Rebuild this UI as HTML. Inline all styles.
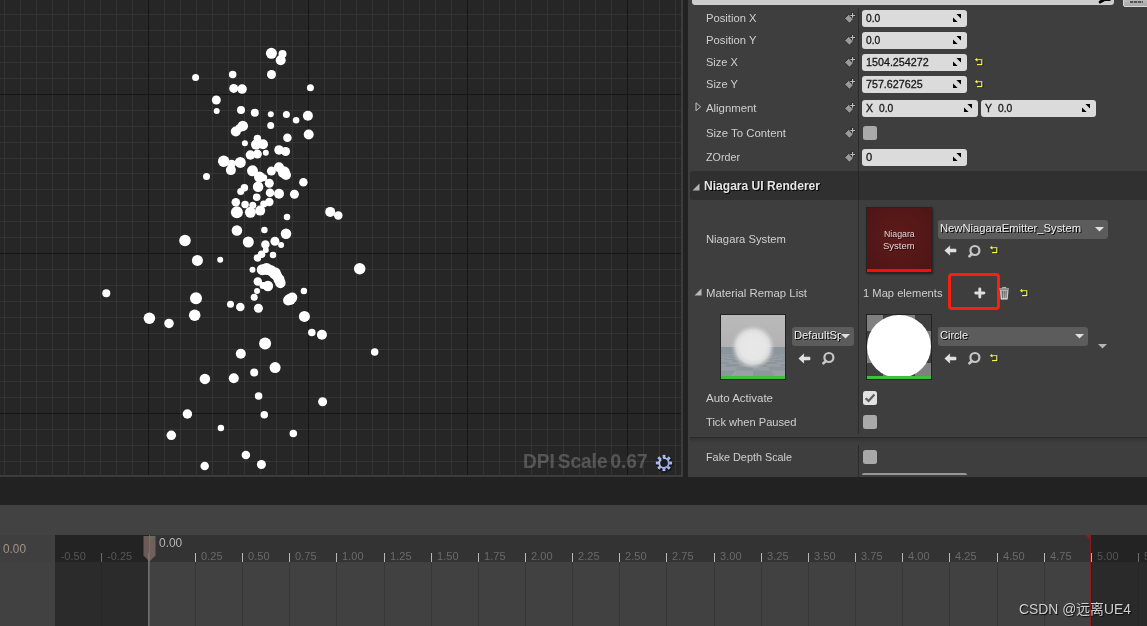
<!DOCTYPE html>
<html lang="zh"><head><meta charset="utf-8"><title>Niagara UI Renderer</title>
<style>
html,body{margin:0;padding:0;}
body{width:1147px;height:626px;overflow:hidden;background:#222222;position:relative;font-family:"Liberation Sans", sans-serif;font-size:12px;}
.a{position:absolute;}
.t{position:absolute;white-space:nowrap;transform-origin:0 50%;line-height:16px;height:16px;}
.box{position:absolute;background:#dbdbdb;border-radius:3px;}
.cb{position:absolute;width:14px;height:14px;border-radius:2.5px;background:#a9a9a9;}
svg{position:absolute;overflow:visible;}
</style></head><body>
<div id="root" class="a" style="left:0;top:0;width:1147px;height:626px;will-change:transform;">

<div class="a" id="viewport" style="left:0;top:0;width:681px;height:475px;background:#262626;border-right:2px solid #3c3c3c;border-bottom:2px solid #3c3c3c;overflow:hidden;">
<svg width="681" height="475" viewBox="0 0 681 475" shape-rendering="crispEdges" style="left:0;top:0">
<path d="M4 -1v477M20 -1v477M36 -1v477M52 -1v477M68 -1v477M84 -1v477M100 -1v477M116 -1v477M132 -1v477M164 -1v477M180 -1v477M196 -1v477M212 -1v477M228 -1v477M244 -1v477M260 -1v477M276 -1v477M292 -1v477M324 -1v477M340 -1v477M356 -1v477M372 -1v477M388 -1v477M403 -1v477M419 -1v477M435 -1v477M451 -1v477M483 -1v477M499 -1v477M515 -1v477M531 -1v477M547 -1v477M563 -1v477M579 -1v477M595 -1v477M611 -1v477M643 -1v477M659 -1v477M675 -1v477M-1 14h683M-1 30h683M-1 46h683M-1 62h683M-1 78h683M-1 110h683M-1 126h683M-1 142h683M-1 158h683M-1 173h683M-1 189h683M-1 205h683M-1 221h683M-1 237h683M-1 269h683M-1 285h683M-1 301h683M-1 317h683M-1 333h683M-1 349h683M-1 365h683M-1 381h683M-1 397h683M-1 429h683M-1 445h683M-1 461h683" stroke="#343434" stroke-width="1" fill="none" transform="translate(0.5,0.5)"/>
<path d="M148 -1v477M308 -1v477M467 -1v477M627 -1v477M-1 94h683M-1 253h683M-1 413h683" stroke="#161616" stroke-width="1" fill="none" transform="translate(0.5,0.5)"/>
</svg>
<svg width="681" height="475" viewBox="0 0 681 475" style="left:0;top:0"><g fill="#ffffff">
<circle cx="271.4" cy="53.3" r="5.50"/>
<circle cx="282.5" cy="54.0" r="4.00"/>
<circle cx="280.7" cy="60.2" r="5.00"/>
<circle cx="195.6" cy="77.4" r="3.50"/>
<circle cx="232.7" cy="74.5" r="3.75"/>
<circle cx="271.5" cy="74.5" r="4.50"/>
<circle cx="233.7" cy="88.4" r="4.50"/>
<circle cx="242.1" cy="89.1" r="4.75"/>
<circle cx="310.4" cy="87.8" r="3.50"/>
<circle cx="216.3" cy="100.0" r="4.50"/>
<circle cx="216.7" cy="110.9" r="3.00"/>
<circle cx="241.0" cy="110.0" r="4.00"/>
<circle cx="254.8" cy="112.8" r="4.00"/>
<circle cx="270.8" cy="114.3" r="3.00"/>
<circle cx="286.4" cy="114.6" r="3.50"/>
<circle cx="296.1" cy="120.2" r="3.25"/>
<circle cx="307.9" cy="115.7" r="5.00"/>
<circle cx="270.7" cy="125.5" r="3.50"/>
<circle cx="242.8" cy="125.9" r="5.25"/>
<circle cx="235.8" cy="131.5" r="5.00"/>
<circle cx="239.3" cy="128.2" r="4.00"/>
<circle cx="308.7" cy="134.5" r="5.00"/>
<circle cx="287.4" cy="137.7" r="4.25"/>
<circle cx="244.9" cy="143.2" r="3.00"/>
<circle cx="257.4" cy="138.4" r="3.75"/>
<circle cx="256.0" cy="144.6" r="5.00"/>
<circle cx="263.0" cy="144.3" r="5.00"/>
<circle cx="265.8" cy="152.7" r="3.00"/>
<circle cx="279.0" cy="149.9" r="4.75"/>
<circle cx="285.6" cy="151.5" r="4.50"/>
<circle cx="250.4" cy="155.0" r="4.75"/>
<circle cx="257.4" cy="154.1" r="4.50"/>
<circle cx="223.7" cy="161.3" r="5.75"/>
<circle cx="231.6" cy="163.8" r="4.00"/>
<circle cx="240.3" cy="162.4" r="5.50"/>
<circle cx="230.9" cy="170.1" r="5.00"/>
<circle cx="206.5" cy="176.4" r="3.50"/>
<circle cx="252.5" cy="170.8" r="5.50"/>
<circle cx="259.5" cy="177.1" r="5.50"/>
<circle cx="263.7" cy="177.8" r="3.50"/>
<circle cx="271.4" cy="171.1" r="4.50"/>
<circle cx="279.0" cy="167.3" r="5.00"/>
<circle cx="283.9" cy="172.2" r="6.00"/>
<circle cx="286.0" cy="175.0" r="5.00"/>
<circle cx="303.4" cy="182.2" r="4.25"/>
<circle cx="269.3" cy="183.3" r="4.50"/>
<circle cx="258.1" cy="186.8" r="5.25"/>
<circle cx="244.4" cy="187.8" r="3.75"/>
<circle cx="240.7" cy="191.4" r="3.50"/>
<circle cx="270.0" cy="192.7" r="4.25"/>
<circle cx="279.0" cy="193.8" r="5.00"/>
<circle cx="294.4" cy="194.2" r="4.50"/>
<circle cx="256.7" cy="197.3" r="3.75"/>
<circle cx="235.8" cy="202.3" r="4.25"/>
<circle cx="245.1" cy="204.6" r="3.75"/>
<circle cx="252.8" cy="205.3" r="3.50"/>
<circle cx="269.3" cy="201.9" r="4.25"/>
<circle cx="263.7" cy="203.9" r="3.50"/>
<circle cx="236.9" cy="212.3" r="6.00"/>
<circle cx="250.4" cy="212.3" r="5.50"/>
<circle cx="260.2" cy="210.6" r="5.00"/>
<circle cx="287.0" cy="216.9" r="3.25"/>
<circle cx="330.2" cy="211.9" r="5.00"/>
<circle cx="338.3" cy="215.4" r="4.25"/>
<circle cx="236.9" cy="230.5" r="5.25"/>
<circle cx="264.4" cy="229.9" r="3.25"/>
<circle cx="286.0" cy="233.7" r="5.25"/>
<circle cx="185.0" cy="240.5" r="5.75"/>
<circle cx="248.3" cy="242.0" r="5.50"/>
<circle cx="274.9" cy="241.3" r="4.50"/>
<circle cx="281.1" cy="245.1" r="3.00"/>
<circle cx="265.4" cy="244.4" r="4.25"/>
<circle cx="265.8" cy="250.0" r="3.00"/>
<circle cx="261.6" cy="254.2" r="3.75"/>
<circle cx="257.4" cy="257.9" r="3.75"/>
<circle cx="273.0" cy="254.9" r="3.25"/>
<circle cx="197.4" cy="260.4" r="5.50"/>
<circle cx="220.2" cy="259.7" r="3.00"/>
<circle cx="252.5" cy="269.7" r="3.00"/>
<circle cx="262.3" cy="269.7" r="5.50"/>
<circle cx="270.7" cy="270.4" r="5.50"/>
<circle cx="276.9" cy="275.9" r="5.25"/>
<circle cx="280.4" cy="282.9" r="5.25"/>
<circle cx="257.8" cy="281.5" r="4.25"/>
<circle cx="267.9" cy="286.0" r="5.25"/>
<circle cx="263.0" cy="285.5" r="3.50"/>
<circle cx="257.0" cy="290.9" r="3.00"/>
<circle cx="254.2" cy="297.2" r="3.50"/>
<circle cx="303.9" cy="291.0" r="3.25"/>
<circle cx="196.0" cy="298.3" r="6.00"/>
<circle cx="288.1" cy="300.4" r="5.00"/>
<circle cx="292.3" cy="297.6" r="5.00"/>
<circle cx="230.5" cy="304.3" r="3.50"/>
<circle cx="240.3" cy="306.9" r="4.25"/>
<circle cx="258.4" cy="308.3" r="4.50"/>
<circle cx="194.7" cy="315.3" r="5.75"/>
<circle cx="304.4" cy="316.4" r="5.50"/>
<circle cx="311.8" cy="332.4" r="3.75"/>
<circle cx="321.9" cy="334.8" r="5.00"/>
<circle cx="265.1" cy="343.6" r="6.00"/>
<circle cx="240.8" cy="353.8" r="5.00"/>
<circle cx="275.1" cy="367.6" r="5.50"/>
<circle cx="254.2" cy="372.5" r="4.00"/>
<circle cx="233.8" cy="378.2" r="5.00"/>
<circle cx="204.9" cy="378.9" r="5.25"/>
<circle cx="258.6" cy="396.0" r="3.75"/>
<circle cx="322.6" cy="401.8" r="4.50"/>
<circle cx="187.4" cy="414.0" r="4.75"/>
<circle cx="264.3" cy="414.7" r="3.75"/>
<circle cx="220.9" cy="427.9" r="3.25"/>
<circle cx="171.3" cy="435.3" r="4.75"/>
<circle cx="293.3" cy="433.5" r="3.75"/>
<circle cx="106.3" cy="293.2" r="4.00"/>
<circle cx="149.4" cy="318.2" r="5.75"/>
<circle cx="169.0" cy="323.4" r="4.75"/>
<circle cx="245.9" cy="454.9" r="4.25"/>
<circle cx="204.7" cy="466.0" r="4.25"/>
<circle cx="261.4" cy="464.5" r="4.50"/>
<circle cx="359.7" cy="268.8" r="5.75"/>
<circle cx="374.7" cy="352.1" r="3.75"/>
<circle cx="266.5" cy="269.0" r="6.00"/>
<circle cx="274.9" cy="273.2" r="6.00"/>
<circle cx="279.0" cy="279.4" r="5.50"/>
<circle cx="290.2" cy="299.2" r="5.75"/>
</g></svg>
<span class="t" id="dpi" style="transform:scaleX(0.9072);left:523.4px;top:448.5px;font-size:21px;line-height:24px;height:24px;font-weight:bold;color:rgba(255,255,255,.215);word-spacing:-2.6px;">DPI Scale 0.67</span>
<svg width="20" height="20" viewBox="-10 -10 20 20" style="left:654px;top:453px"><defs><linearGradient id="gg" x1="0" y1="1" x2="1" y2="0"><stop offset="0" stop-color="#8c9ed8"/><stop offset="1" stop-color="#bccaf6"/></linearGradient></defs>
<g transform="translate(0.7,0.8)" fill="#101010" stroke="#101010" opacity=".8">
<rect x="-1.7" y="-8.2" width="3.4" height="3.6" transform="rotate(0)"/>
<rect x="-1.7" y="-8.2" width="3.4" height="3.6" transform="rotate(45)"/>
<rect x="-1.7" y="-8.2" width="3.4" height="3.6" transform="rotate(90)"/>
<rect x="-1.7" y="-8.2" width="3.4" height="3.6" transform="rotate(135)"/>
<rect x="-1.7" y="-8.2" width="3.4" height="3.6" transform="rotate(180)"/>
<rect x="-1.7" y="-8.2" width="3.4" height="3.6" transform="rotate(225)"/>
<rect x="-1.7" y="-8.2" width="3.4" height="3.6" transform="rotate(270)"/>
<rect x="-1.7" y="-8.2" width="3.4" height="3.6" transform="rotate(315)"/>
<circle r="4.8" fill="none" stroke-width="2"/></g>
<circle r="3.9" fill="#1a1a1a"/>
<g fill="url(#gg)">
<rect x="-1.45" y="-8.1" width="2.9" height="3.4" transform="rotate(0)"/>
<rect x="-1.45" y="-8.1" width="2.9" height="3.4" transform="rotate(45)"/>
<rect x="-1.45" y="-8.1" width="2.9" height="3.4" transform="rotate(90)"/>
<rect x="-1.45" y="-8.1" width="2.9" height="3.4" transform="rotate(135)"/>
<rect x="-1.45" y="-8.1" width="2.9" height="3.4" transform="rotate(180)"/>
<rect x="-1.45" y="-8.1" width="2.9" height="3.4" transform="rotate(225)"/>
<rect x="-1.45" y="-8.1" width="2.9" height="3.4" transform="rotate(270)"/>
<rect x="-1.45" y="-8.1" width="2.9" height="3.4" transform="rotate(315)"/>
</g><circle r="4.8" fill="none" stroke="url(#gg)" stroke-width="1.9" stroke-dasharray="27.16 3" transform="rotate(-100)"/></svg>
</div>
<div class="a" id="panel" style="left:688px;top:0;width:459px;height:477px;background:#3e3e3e;overflow:hidden;">
<div class="a" style="left:4px;top:-6px;width:422px;height:11px;background:#cdcdcd;border-radius:3px;"></div>
<svg width="14" height="6" viewBox="0 0 14 6" style="left:410px;top:0"><path d="M2.2 2 L8 -1.2" stroke="#000" stroke-width="3" stroke-linecap="round"/><path d="M6 -0.2h6.5" stroke="#000" stroke-width="2.4"/></svg>
<div class="a" style="left:435px;top:-4px;width:30px;height:9px;background:linear-gradient(#c6c6c6,#a8a8a8);border:1px solid #d8d8d8;border-radius:2px;"></div>
<div class="a" style="left:442px;top:1px;width:13px;height:2px;background:repeating-linear-gradient(90deg,#555 0 3px,#999 3px 4px);"></div>
<div class="a" style="left:170px;top:8px;width:1px;height:426px;background:#2b2b2b;"></div>
<div class="a" style="left:170px;top:445px;width:1px;height:40px;background:#2b2b2b;"></div>
<div class="a" style="left:2px;top:171px;width:457px;height:29px;background:#303030;border-radius:3px 0 0 3px;"></div>
<div class="a" style="left:170px;top:171px;width:1px;height:29px;background:#262626;"></div>
<svg width="8" height="8" viewBox="0 0 8 8" style="left:4.399999999999977px;top:182.5px"><path d="M7.5 0.5v7h-7z" fill="#b4b4b4"/></svg>
<span class="t" style="transform:scaleX(0.9148);left:15.700000000000045px;top:178.4px;font-size:13.2px;font-weight:bold;color:#e6e6e6;text-shadow:1px 1px 0 #000;">Niagara UI Renderer</span>
<span class="t" style="transform:scaleX(1.0196);left:18.0px;top:10.3px;font-size:11px;color:#cfcfcf;">Position X</span>
<span class="t" style="transform:scaleX(1.0238);left:18.0px;top:32.3px;font-size:11px;color:#cfcfcf;">Position Y</span>
<span class="t" style="transform:scaleX(1.0001);left:18.0px;top:54.3px;font-size:11px;color:#cfcfcf;">Size X</span>
<span class="t" style="transform:scaleX(1.0065);left:18.0px;top:76.3px;font-size:11px;color:#cfcfcf;">Size Y</span>
<span class="t" style="transform:scaleX(1.0323);left:18.0px;top:100.3px;font-size:11px;color:#cfcfcf;">Alignment</span>
<span class="t" style="transform:scaleX(1.0327);left:18.0px;top:125.3px;font-size:11px;color:#cfcfcf;">Size To Content</span>
<span class="t" style="transform:scaleX(0.9758);left:18.0px;top:149.3px;font-size:11px;color:#cfcfcf;">ZOrder</span>
<span class="t" style="transform:scaleX(1.0222);left:18.0px;top:231.3px;font-size:11px;color:#cfcfcf;">Niagara System</span>
<span class="t" style="transform:scaleX(1.0324);left:18.0px;top:285.3px;font-size:11px;color:#cfcfcf;">Material Remap List</span>
<span class="t" style="transform:scaleX(1.0433);left:18.0px;top:390.3px;font-size:11px;color:#cfcfcf;">Auto Activate</span>
<span class="t" style="transform:scaleX(1.0113);left:18.0px;top:414.3px;font-size:11px;color:#cfcfcf;">Tick when Paused</span>
<span class="t" style="transform:scaleX(0.9836);left:18.0px;top:449.3px;font-size:11px;color:#cfcfcf;">Fake Depth Scale</span>
<span class="t" style="transform:scaleX(1.0158);left:175.0px;top:285.3px;font-size:11px;color:#cfcfcf;">1 Map elements</span>
<svg width="8" height="10" viewBox="0 0 8 10" style="left:7px;top:102px"><path d="M1 0.8 L5.6 4.8 L1 8.8z" fill="none" stroke="#c0c0c0" stroke-width="1"/></svg>
<svg width="8" height="8" viewBox="0 0 8 8" style="left:6px;top:288px"><path d="M7.5 0.5v7h-7z" fill="#b8b8b8"/></svg>
<svg width="13" height="13" viewBox="0 0 13 13" style="left:156px;top:12.0px"><path d="M0.7 6.4 L4.8 2.2 L9.6 6.9 L5.4 11.3z" fill="#9a9a9a" stroke="#2a2a2a" stroke-width="0.9"/><path d="M5.8 3.5h5.8M8.6 0.6v5.7" stroke="#2a2a2a" stroke-width="2.6"/><path d="M6.3 3.5h4.8M8.6 1.1v4.7" stroke="#bcbcbc" stroke-width="1.15"/></svg>
<svg width="13" height="13" viewBox="0 0 13 13" style="left:156px;top:34.0px"><path d="M0.7 6.4 L4.8 2.2 L9.6 6.9 L5.4 11.3z" fill="#9a9a9a" stroke="#2a2a2a" stroke-width="0.9"/><path d="M5.8 3.5h5.8M8.6 0.6v5.7" stroke="#2a2a2a" stroke-width="2.6"/><path d="M6.3 3.5h4.8M8.6 1.1v4.7" stroke="#bcbcbc" stroke-width="1.15"/></svg>
<svg width="13" height="13" viewBox="0 0 13 13" style="left:156px;top:56.0px"><path d="M0.7 6.4 L4.8 2.2 L9.6 6.9 L5.4 11.3z" fill="#9a9a9a" stroke="#2a2a2a" stroke-width="0.9"/><path d="M5.8 3.5h5.8M8.6 0.6v5.7" stroke="#2a2a2a" stroke-width="2.6"/><path d="M6.3 3.5h4.8M8.6 1.1v4.7" stroke="#bcbcbc" stroke-width="1.15"/></svg>
<svg width="13" height="13" viewBox="0 0 13 13" style="left:156px;top:78.0px"><path d="M0.7 6.4 L4.8 2.2 L9.6 6.9 L5.4 11.3z" fill="#9a9a9a" stroke="#2a2a2a" stroke-width="0.9"/><path d="M5.8 3.5h5.8M8.6 0.6v5.7" stroke="#2a2a2a" stroke-width="2.6"/><path d="M6.3 3.5h4.8M8.6 1.1v4.7" stroke="#bcbcbc" stroke-width="1.15"/></svg>
<svg width="13" height="13" viewBox="0 0 13 13" style="left:156px;top:102.0px"><path d="M0.7 6.4 L4.8 2.2 L9.6 6.9 L5.4 11.3z" fill="#9a9a9a" stroke="#2a2a2a" stroke-width="0.9"/><path d="M5.8 3.5h5.8M8.6 0.6v5.7" stroke="#2a2a2a" stroke-width="2.6"/><path d="M6.3 3.5h4.8M8.6 1.1v4.7" stroke="#bcbcbc" stroke-width="1.15"/></svg>
<svg width="13" height="13" viewBox="0 0 13 13" style="left:156px;top:126.5px"><path d="M0.7 6.4 L4.8 2.2 L9.6 6.9 L5.4 11.3z" fill="#9a9a9a" stroke="#2a2a2a" stroke-width="0.9"/><path d="M5.8 3.5h5.8M8.6 0.6v5.7" stroke="#2a2a2a" stroke-width="2.6"/><path d="M6.3 3.5h4.8M8.6 1.1v4.7" stroke="#bcbcbc" stroke-width="1.15"/></svg>
<svg width="13" height="13" viewBox="0 0 13 13" style="left:156px;top:151.0px"><path d="M0.7 6.4 L4.8 2.2 L9.6 6.9 L5.4 11.3z" fill="#9a9a9a" stroke="#2a2a2a" stroke-width="0.9"/><path d="M5.8 3.5h5.8M8.6 0.6v5.7" stroke="#2a2a2a" stroke-width="2.6"/><path d="M6.3 3.5h4.8M8.6 1.1v4.7" stroke="#bcbcbc" stroke-width="1.15"/></svg>
<div class="box" style="left:174px;top:10px;width:105px;height:17px;"></div>
<svg width="8" height="8" viewBox="0 0 8 8" style="left:265px;top:14px"><path d="M3.4 0H8v4.6zM0 3.4V8h4.6z" fill="#000"/></svg>
<span class="t" style="transform:scaleX(0.9348);left:177.6px;top:10.4px;font-size:11px;color:#161616;-webkit-text-stroke:0.3px #161616;">0.0</span>
<div class="box" style="left:174px;top:32px;width:105px;height:17px;"></div>
<svg width="8" height="8" viewBox="0 0 8 8" style="left:265px;top:36px"><path d="M3.4 0H8v4.6zM0 3.4V8h4.6z" fill="#000"/></svg>
<span class="t" style="transform:scaleX(0.9348);left:177.6px;top:32.4px;font-size:11px;color:#161616;-webkit-text-stroke:0.3px #161616;">0.0</span>
<div class="box" style="left:174px;top:54px;width:105px;height:17px;"></div>
<svg width="8" height="8" viewBox="0 0 8 8" style="left:265px;top:58px"><path d="M3.4 0H8v4.6zM0 3.4V8h4.6z" fill="#000"/></svg>
<span class="t" style="transform:scaleX(0.9761);left:177.6px;top:54.4px;font-size:11px;color:#161616;-webkit-text-stroke:0.3px #161616;">1504.254272</span>
<div class="box" style="left:174px;top:76px;width:105px;height:17px;"></div>
<svg width="8" height="8" viewBox="0 0 8 8" style="left:265px;top:80px"><path d="M3.4 0H8v4.6zM0 3.4V8h4.6z" fill="#000"/></svg>
<span class="t" style="transform:scaleX(0.9738);left:177.6px;top:76.4px;font-size:11px;color:#161616;-webkit-text-stroke:0.3px #161616;">757.627625</span>
<div class="box" style="left:174px;top:100px;width:116px;height:17px;"></div>
<svg width="8" height="8" viewBox="0 0 8 8" style="left:276px;top:104px"><path d="M3.4 0H8v4.6zM0 3.4V8h4.6z" fill="#000"/></svg>
<span class="t" style="transform:scaleX(0.9532);left:177.6px;top:100.4px;font-size:11px;color:#161616;-webkit-text-stroke:0.3px #161616;">X</span>
<span class="t" style="transform:scaleX(0.9348);left:191.0px;top:100.4px;font-size:11px;color:#161616;-webkit-text-stroke:0.3px #161616;">0.0</span>
<div class="box" style="left:293px;top:100px;width:115px;height:17px;"></div>
<svg width="8" height="8" viewBox="0 0 8 8" style="left:394px;top:104px"><path d="M3.4 0H8v4.6zM0 3.4V8h4.6z" fill="#000"/></svg>
<span class="t" style="transform:scaleX(0.9532);left:296.6px;top:100.4px;font-size:11px;color:#161616;-webkit-text-stroke:0.3px #161616;">Y</span>
<span class="t" style="transform:scaleX(0.9348);left:310.0px;top:100.4px;font-size:11px;color:#161616;-webkit-text-stroke:0.3px #161616;">0.0</span>
<div class="box" style="left:174px;top:149px;width:105px;height:17px;"></div>
<svg width="8" height="8" viewBox="0 0 8 8" style="left:265px;top:153px"><path d="M3.4 0H8v4.6zM0 3.4V8h4.6z" fill="#000"/></svg>
<span class="t" style="transform:scaleX(1.0122);left:177.6px;top:149.4px;font-size:11px;color:#161616;-webkit-text-stroke:0.3px #161616;">0</span>
<svg width="10" height="10" viewBox="0 0 10 10" style="left:286.79999999999995px;top:57.8px"><g transform="translate(0.9,0.9)" stroke="#14143c" fill="#14143c"><path d="M0.2 1.7 L1.8 0.2 L2.4 3.3z" stroke-width="0.5"/><path d="M1.7 1.7H6.8V6.6H2.1" fill="none" stroke-width="1.2"/></g><path d="M0.2 1.7 L1.8 0.2 L2.4 3.3z" fill="#f8f840" stroke="#f8f840" stroke-width="0.5"/><path d="M1.7 1.7H6.8V6.6H2.1" fill="none" stroke="#f8f840" stroke-width="1.15"/></svg>
<svg width="10" height="10" viewBox="0 0 10 10" style="left:286.79999999999995px;top:79.8px"><g transform="translate(0.9,0.9)" stroke="#14143c" fill="#14143c"><path d="M0.2 1.7 L1.8 0.2 L2.4 3.3z" stroke-width="0.5"/><path d="M1.7 1.7H6.8V6.6H2.1" fill="none" stroke-width="1.2"/></g><path d="M0.2 1.7 L1.8 0.2 L2.4 3.3z" fill="#f8f840" stroke="#f8f840" stroke-width="0.5"/><path d="M1.7 1.7H6.8V6.6H2.1" fill="none" stroke="#f8f840" stroke-width="1.15"/></svg>
<svg width="10" height="10" viewBox="0 0 10 10" style="left:301.79999999999995px;top:246px"><g transform="translate(0.9,0.9)" stroke="#14143c" fill="#14143c"><path d="M0.2 1.7 L1.8 0.2 L2.4 3.3z" stroke-width="0.5"/><path d="M1.7 1.7H6.8V6.6H2.1" fill="none" stroke-width="1.2"/></g><path d="M0.2 1.7 L1.8 0.2 L2.4 3.3z" fill="#f8f840" stroke="#f8f840" stroke-width="0.5"/><path d="M1.7 1.7H6.8V6.6H2.1" fill="none" stroke="#f8f840" stroke-width="1.15"/></svg>
<svg width="10" height="10" viewBox="0 0 10 10" style="left:332px;top:288.8px"><g transform="translate(0.9,0.9)" stroke="#14143c" fill="#14143c"><path d="M0.2 1.7 L1.8 0.2 L2.4 3.3z" stroke-width="0.5"/><path d="M1.7 1.7H6.8V6.6H2.1" fill="none" stroke-width="1.2"/></g><path d="M0.2 1.7 L1.8 0.2 L2.4 3.3z" fill="#f8f840" stroke="#f8f840" stroke-width="0.5"/><path d="M1.7 1.7H6.8V6.6H2.1" fill="none" stroke="#f8f840" stroke-width="1.15"/></svg>
<svg width="10" height="10" viewBox="0 0 10 10" style="left:302.20000000000005px;top:354.2px"><g transform="translate(0.9,0.9)" stroke="#14143c" fill="#14143c"><path d="M0.2 1.7 L1.8 0.2 L2.4 3.3z" stroke-width="0.5"/><path d="M1.7 1.7H6.8V6.6H2.1" fill="none" stroke-width="1.2"/></g><path d="M0.2 1.7 L1.8 0.2 L2.4 3.3z" fill="#f8f840" stroke="#f8f840" stroke-width="0.5"/><path d="M1.7 1.7H6.8V6.6H2.1" fill="none" stroke="#f8f840" stroke-width="1.15"/></svg>
<div class="cb" style="left:175px;top:126px;"></div>
<div class="cb" style="left:175px;top:391px;background:#e2e2e2;"></div>
<svg width="14" height="14" viewBox="0 0 14 14" style="left:175px;top:391px"><path d="M2.6 7.2 L5.6 10 L11.4 3.6" fill="none" stroke="#5c5c5c" stroke-width="2.2"/></svg>
<div class="cb" style="left:175px;top:415px;"></div>
<div class="cb" style="left:175px;top:450px;"></div>
<div class="a" style="left:174px;top:473px;width:105px;height:2px;background:#979797;border-radius:2px 2px 0 0;"></div>
<div class="a" style="left:2px;top:437px;width:457px;height:1px;background:#2b2b2b;"></div>
<div class="a" style="left:2px;top:438px;width:457px;height:5px;background:linear-gradient(#343434,#3e3e3e);"></div>
<div class="a" style="left:178px;top:207px;width:66px;height:66px;background:#242424;box-shadow:1px 1px 2px rgba(0,0,0,.5);"></div>
<div class="a" style="left:179px;top:208px;width:64px;height:64px;background:radial-gradient(circle at 50% 45%,#5e1a1a,#501616 80%);"></div>
<div class="a" style="left:179px;top:269px;width:64px;height:3px;background:#ff0a0a;"></div>
<span class="t" style="transform:scaleX(0.9224);left:196.29999999999995px;top:226px;font-size:9.5px;color:#e2d6d6;text-shadow:1px 1px 0 rgba(0,0,0,.6);">Niagara</span>
<span class="t" style="transform:scaleX(0.9972);left:195.39999999999998px;top:238.2px;font-size:9.5px;color:#e2d6d6;text-shadow:1px 1px 0 rgba(0,0,0,.6);">System</span>
<div class="a" style="left:250px;top:220px;width:170px;height:18.5px;background:#5c5c5c;border-radius:3px;"></div>
<span class="t" style="transform:scaleX(1.0206);left:251.89999999999998px;top:220.4px;font-size:11px;color:#f0f0f0;text-shadow:1px 1px 0 #000;">NewNiagaraEmitter_System</span>
<svg width="9" height="5" viewBox="0 0 9 5" style="left:407px;top:227.05px"><path d="M0 0h9L4.5 4.6z" fill="#e0e0e0"/></svg>
<div class="a" style="left:104px;top:327px;width:62px;height:19px;background:#5c5c5c;border-radius:3px;"></div>
<span class="t" style="left:105.89999999999998px;top:327.4px;font-size:11px;color:#f0f0f0;text-shadow:1px 1px 0 #000;overflow:hidden;width:45.5px;transform:scaleX(1.02);">DefaultSprite</span>
<svg width="9" height="5" viewBox="0 0 9 5" style="left:153px;top:334.3px"><path d="M0 0h9L4.5 4.6z" fill="#e0e0e0"/></svg>
<div class="a" style="left:250px;top:327px;width:150px;height:19px;background:#5c5c5c;border-radius:3px;"></div>
<span class="t" style="transform:scaleX(1.0027);left:251.89999999999998px;top:327.4px;font-size:11px;color:#f0f0f0;text-shadow:1px 1px 0 #000;">Circle</span>
<svg width="9" height="5" viewBox="0 0 9 5" style="left:387px;top:334.3px"><path d="M0 0h9L4.5 4.6z" fill="#e0e0e0"/></svg>
<svg width="9" height="5" viewBox="0 0 9 5" style="left:409.5px;top:343.5px"><path d="M0 0h9L4.5 4.4z" fill="#b4b4b4"/></svg>
<svg width="13" height="12" viewBox="0 0 13 12" style="left:255.5px;top:245px"><path d="M0.2 5.6 L6.2 0.1 V3.6 H11.3 Q12.7 3.6 12.7 5.6 Q12.7 7.6 11.3 7.6 H6.2 V11.1z" fill="#e2e2e2" stroke="#2c2c2c" stroke-width="0.4"/></svg>
<svg width="13" height="13" viewBox="0 0 13 13" style="left:279.5px;top:245px"><path d="M1.4 11.2 L3.9 9" stroke="#c6c6c6" stroke-width="2.7" stroke-linecap="round"/><circle cx="6.9" cy="5.5" r="4.5" fill="none" stroke="#c6c6c6" stroke-width="2.2"/></svg>
<svg width="13" height="12" viewBox="0 0 13 12" style="left:109.60000000000002px;top:352.8px"><path d="M0.2 5.6 L6.2 0.1 V3.6 H11.3 Q12.7 3.6 12.7 5.6 Q12.7 7.6 11.3 7.6 H6.2 V11.1z" fill="#e2e2e2" stroke="#2c2c2c" stroke-width="0.4"/></svg>
<svg width="13" height="13" viewBox="0 0 13 13" style="left:134px;top:352px"><path d="M1.4 11.2 L3.9 9" stroke="#c6c6c6" stroke-width="2.7" stroke-linecap="round"/><circle cx="6.9" cy="5.5" r="4.5" fill="none" stroke="#c6c6c6" stroke-width="2.2"/></svg>
<svg width="13" height="12" viewBox="0 0 13 12" style="left:255.5px;top:353px"><path d="M0.2 5.6 L6.2 0.1 V3.6 H11.3 Q12.7 3.6 12.7 5.6 Q12.7 7.6 11.3 7.6 H6.2 V11.1z" fill="#e2e2e2" stroke="#2c2c2c" stroke-width="0.4"/></svg>
<svg width="13" height="13" viewBox="0 0 13 13" style="left:279.5px;top:352.3px"><path d="M1.4 11.2 L3.9 9" stroke="#c6c6c6" stroke-width="2.7" stroke-linecap="round"/><circle cx="6.9" cy="5.5" r="4.5" fill="none" stroke="#c6c6c6" stroke-width="2.2"/></svg>
<div class="a" style="left:260px;top:273px;width:46px;height:31px;border:3px solid #f8200f;border-radius:4px;"></div>
<svg width="12" height="12" viewBox="0 0 12 12" style="left:285.5px;top:286.6px"><path d="M5.8 1.9v8.2M1.7 6h8.2" stroke="#dedede" stroke-width="2.9" stroke-linecap="round"/></svg>
<svg width="11" height="13" viewBox="0 0 11 13" style="left:311.4px;top:286.6px"><defs><linearGradient id="tg" x1="0" y1="0" x2="0" y2="1"><stop offset="0" stop-color="#b0b0b0"/><stop offset="1" stop-color="#ececec"/></linearGradient></defs><path d="M3.4 1.2V0.5h3.6v0.7" fill="none" stroke="#b8b8b8" stroke-width="1"/><path d="M0.4 1.3h9.6v1.3H0.4z" fill="#bcbcbc"/><path d="M0.8 3.1h8.8l-1 9.3H1.8z" fill="url(#tg)"/><path d="M3.3 4v7.4M5.2 4v7.4M7.1 4v7.4" stroke="#4a4a4a" stroke-width="0.9"/></svg>
<div class="a" style="left:32px;top:314px;width:66px;height:66px;background:#232323;"></div>
<div class="a" style="left:33px;top:315px;width:64px;height:64px;background:linear-gradient(#bababa 0,#b2b2b2 32px,#8b959c 32px,#8f979e 64px);overflow:hidden;">
<svg width="64" height="64" viewBox="0 0 64 64" style="left:0;top:0"><g fill="#a2a9af" opacity=".55">
<path d="M-25.7 70.2L3.2 70.2L10.0 61.1L-11.9 61.1z"/>
<path d="M32.0 70.2L60.8 70.2L54.0 61.1L32.0 61.1z"/>
<path d="M10.0 61.1L32.0 61.1L32.0 55.5L14.3 55.5z"/>
<path d="M54.0 61.1L75.9 61.1L67.5 55.5L49.7 55.5z"/>
<path d="M-3.5 55.5L14.3 55.5L17.1 51.7L2.3 51.7z"/>
<path d="M32.0 55.5L49.7 55.5L46.9 51.7L32.0 51.7z"/>
<path d="M67.5 55.5L85.2 55.5L76.6 51.7L61.7 51.7z"/>
<path d="M-12.6 51.7L2.3 51.7L6.4 49.0L-6.4 49.0z"/>
<path d="M17.1 51.7L32.0 51.7L32.0 49.0L19.2 49.0z"/>
<path d="M46.9 51.7L61.7 51.7L57.6 49.0L44.8 49.0z"/>
<path d="M6.4 49.0L19.2 49.0L20.8 46.9L9.5 46.9z"/>
<path d="M32.0 49.0L44.8 49.0L43.2 46.9L32.0 46.9z"/>
<path d="M57.6 49.0L70.4 49.0L65.7 46.9L54.5 46.9z"/>
<path d="M-1.7 46.9L9.5 46.9L12.0 45.3L2.0 45.3z"/>
<path d="M20.8 46.9L32.0 46.9L32.0 45.3L22.0 45.3z"/>
<path d="M43.2 46.9L54.5 46.9L52.0 45.3L42.0 45.3z"/>
<path d="M65.7 46.9L76.9 46.9L72.0 45.3L62.0 45.3z"/>
<path d="M-8.0 45.3L2.0 45.3L4.9 44.0L-4.1 44.0z"/>
<path d="M12.0 45.3L22.0 45.3L23.0 44.0L13.9 44.0z"/>
<path d="M32.0 45.3L42.0 45.3L41.0 44.0L32.0 44.0z"/>
<path d="M52.0 45.3L62.0 45.3L59.1 44.0L50.1 44.0z"/>
<path d="M4.9 44.0L13.9 44.0L15.6 42.9L7.3 42.9z"/>
<path d="M23.0 44.0L32.0 44.0L32.0 42.9L23.8 42.9z"/>
<path d="M41.0 44.0L50.1 44.0L48.4 42.9L40.2 42.9z"/>
<path d="M59.1 44.0L68.1 44.0L64.9 42.9L56.7 42.9z"/>
<path d="M-0.9 42.9L7.3 42.9L9.4 42.0L1.8 42.0z"/>
<path d="M15.6 42.9L23.8 42.9L24.5 42.0L16.9 42.0z"/>
<path d="M32.0 42.9L40.2 42.9L39.5 42.0L32.0 42.0z"/>
<path d="M48.4 42.9L56.7 42.9L54.6 42.0L47.1 42.0z"/>
<path d="M64.9 42.9L73.1 42.9L69.7 42.0L62.2 42.0z"/>
<path d="M-5.7 42.0L1.8 42.0L4.1 41.2L-2.9 41.2z"/>
<path d="M9.4 42.0L16.9 42.0L18.1 41.2L11.1 41.2z"/>
<path d="M24.5 42.0L32.0 42.0L32.0 41.2L25.0 41.2z"/>
<path d="M39.5 42.0L47.1 42.0L45.9 41.2L39.0 41.2z"/>
<path d="M54.6 42.0L62.2 42.0L59.9 41.2L52.9 41.2z"/>
<path d="M4.1 41.2L11.1 41.2L12.5 40.6L6.1 40.6z"/>
<path d="M18.1 41.2L25.0 41.2L25.5 40.6L19.0 40.6z"/>
<path d="M32.0 41.2L39.0 41.2L38.5 40.6L32.0 40.6z"/>
<path d="M45.9 41.2L52.9 41.2L51.5 40.6L45.0 40.6z"/>
<path d="M59.9 41.2L66.9 41.2L64.4 40.6L57.9 40.6z"/>
<path d="M-0.4 40.6L6.1 40.6L7.8 40.0L1.7 40.0z"/>
<path d="M12.5 40.6L19.0 40.6L19.9 40.0L13.8 40.0z"/>
<path d="M25.5 40.6L32.0 40.6L32.0 40.0L25.9 40.0z"/>
<path d="M38.5 40.6L45.0 40.6L44.1 40.0L38.1 40.0z"/>
<path d="M51.5 40.6L57.9 40.6L56.2 40.0L50.2 40.0z"/>
<path d="M64.4 40.6L70.9 40.6L68.3 40.0L62.3 40.0z"/>
<path d="M-4.3 40.0L1.7 40.0L3.6 39.5L-2.1 39.5z"/>
<path d="M7.8 40.0L13.8 40.0L15.0 39.5L9.3 39.5z"/>
<path d="M19.9 40.0L25.9 40.0L26.3 39.5L20.6 39.5z"/>
<path d="M32.0 40.0L38.1 40.0L37.7 39.5L32.0 39.5z"/>
<path d="M44.1 40.0L50.2 40.0L49.0 39.5L43.4 39.5z"/>
<path d="M56.2 40.0L62.3 40.0L60.4 39.5L54.7 39.5z"/>
<path d="M3.6 39.5L9.3 39.5L10.6 39.1L5.2 39.1z"/>
<path d="M15.0 39.5L20.6 39.5L21.3 39.1L15.9 39.1z"/>
<path d="M26.3 39.5L32.0 39.5L32.0 39.1L26.6 39.1z"/>
<path d="M37.7 39.5L43.4 39.5L42.7 39.1L37.4 39.1z"/>
<path d="M49.0 39.5L54.7 39.5L53.4 39.1L48.1 39.1z"/>
<path d="M60.4 39.5L66.1 39.5L64.1 39.1L58.8 39.1z"/>
</g></svg>
<div class="a" style="left:10px;top:10px;width:44px;height:44px;border-radius:50%;background:radial-gradient(circle closest-side,#e8e8e8 0,#e6e6e6 58%,rgba(228,228,228,.85) 76%,rgba(218,218,218,.35) 89%,rgba(200,200,200,0) 100%);"></div><div class="a" style="left:0;bottom:0;width:64px;height:3px;background:#3dc03d;"></div></div>
<div class="a" style="left:178px;top:314px;width:66px;height:66px;background:#232323;"></div>
<div class="a" style="left:179px;top:315px;width:64px;height:64px;background-color:#404040;background-image:conic-gradient(#404040 25%,#808080 0 50%,#404040 0 75%,#808080 0);background-size:32px 32px;overflow:hidden;"><div class="a" style="left:0.2px;top:-0.2px;width:63.6px;height:63.6px;border-radius:50%;background:#fff;"></div><div class="a" style="left:0;bottom:0;width:64px;height:3px;background:#3dc03d;"></div></div>
</div>
<div class="a" style="left:0;top:505px;width:1147px;height:121px;background:#424242;"></div>
<div class="a" id="timeline" style="left:0;top:535px;width:1147px;height:91px;background:#414141;overflow:hidden;">
<div class="a" style="left:0;top:0;width:51px;height:27px;background:#3f3f3f;border-radius:0 3px 3px 0;"></div>
<span class="t" style="transform:scaleX(0.9448);left:3.4px;top:5.6px;font-size:12.5px;color:#a29288;">0.00</span>
<div class="a" style="left:55px;top:0;width:1092px;height:27px;background:#333333;"></div>
<div class="a" style="left:55px;top:0;width:94px;height:27px;background:#232323;"></div>
<div class="a" style="left:55px;top:27px;width:94px;height:70px;background:#2b2b2b;"></div>
<div class="a" style="left:1091px;top:0;width:56px;height:27px;background:#232323;"></div>
<div class="a" style="left:1091px;top:27px;width:56px;height:70px;background:#2a2a2a;"></div>
<div class="a" style="left:101px;top:18px;width:1px;height:9px;background:#6e6e6e;"></div>
<div class="a" style="left:101px;top:27px;width:1px;height:70px;background:#262626;"></div>
<span class="t" style="left:107.1px;top:13px;font-size:11px;color:#565656;">-0.25</span>
<div class="a" style="left:195px;top:18px;width:1px;height:9px;background:#b8b8b8;"></div>
<div class="a" style="left:195px;top:27px;width:1px;height:70px;background:#373737;"></div>
<span class="t" style="left:201.1px;top:13px;font-size:11px;color:#6a6a6a;">0.25</span>
<div class="a" style="left:242px;top:18px;width:1px;height:9px;background:#b8b8b8;"></div>
<div class="a" style="left:242px;top:27px;width:1px;height:70px;background:#373737;"></div>
<span class="t" style="left:248.1px;top:13px;font-size:11px;color:#6a6a6a;">0.50</span>
<div class="a" style="left:289px;top:18px;width:1px;height:9px;background:#b8b8b8;"></div>
<div class="a" style="left:289px;top:27px;width:1px;height:70px;background:#373737;"></div>
<span class="t" style="left:295.1px;top:13px;font-size:11px;color:#6a6a6a;">0.75</span>
<div class="a" style="left:336px;top:18px;width:1px;height:9px;background:#b8b8b8;"></div>
<div class="a" style="left:336px;top:27px;width:1px;height:70px;background:#373737;"></div>
<span class="t" style="left:342.1px;top:13px;font-size:11px;color:#6a6a6a;">1.00</span>
<div class="a" style="left:384px;top:18px;width:1px;height:9px;background:#b8b8b8;"></div>
<div class="a" style="left:384px;top:27px;width:1px;height:70px;background:#373737;"></div>
<span class="t" style="left:390.1px;top:13px;font-size:11px;color:#6a6a6a;">1.25</span>
<div class="a" style="left:431px;top:18px;width:1px;height:9px;background:#b8b8b8;"></div>
<div class="a" style="left:431px;top:27px;width:1px;height:70px;background:#373737;"></div>
<span class="t" style="left:437.1px;top:13px;font-size:11px;color:#6a6a6a;">1.50</span>
<div class="a" style="left:478px;top:18px;width:1px;height:9px;background:#b8b8b8;"></div>
<div class="a" style="left:478px;top:27px;width:1px;height:70px;background:#373737;"></div>
<span class="t" style="left:484.1px;top:13px;font-size:11px;color:#6a6a6a;">1.75</span>
<div class="a" style="left:525px;top:18px;width:1px;height:9px;background:#b8b8b8;"></div>
<div class="a" style="left:525px;top:27px;width:1px;height:70px;background:#373737;"></div>
<span class="t" style="left:531.1px;top:13px;font-size:11px;color:#6a6a6a;">2.00</span>
<div class="a" style="left:572px;top:18px;width:1px;height:9px;background:#b8b8b8;"></div>
<div class="a" style="left:572px;top:27px;width:1px;height:70px;background:#373737;"></div>
<span class="t" style="left:578.1px;top:13px;font-size:11px;color:#6a6a6a;">2.25</span>
<div class="a" style="left:619px;top:18px;width:1px;height:9px;background:#b8b8b8;"></div>
<div class="a" style="left:619px;top:27px;width:1px;height:70px;background:#373737;"></div>
<span class="t" style="left:625.1px;top:13px;font-size:11px;color:#6a6a6a;">2.50</span>
<div class="a" style="left:666px;top:18px;width:1px;height:9px;background:#b8b8b8;"></div>
<div class="a" style="left:666px;top:27px;width:1px;height:70px;background:#373737;"></div>
<span class="t" style="left:672.1px;top:13px;font-size:11px;color:#6a6a6a;">2.75</span>
<div class="a" style="left:714px;top:18px;width:1px;height:9px;background:#b8b8b8;"></div>
<div class="a" style="left:714px;top:27px;width:1px;height:70px;background:#373737;"></div>
<span class="t" style="left:720.1px;top:13px;font-size:11px;color:#6a6a6a;">3.00</span>
<div class="a" style="left:761px;top:18px;width:1px;height:9px;background:#b8b8b8;"></div>
<div class="a" style="left:761px;top:27px;width:1px;height:70px;background:#373737;"></div>
<span class="t" style="left:767.1px;top:13px;font-size:11px;color:#6a6a6a;">3.25</span>
<div class="a" style="left:808px;top:18px;width:1px;height:9px;background:#b8b8b8;"></div>
<div class="a" style="left:808px;top:27px;width:1px;height:70px;background:#373737;"></div>
<span class="t" style="left:814.1px;top:13px;font-size:11px;color:#6a6a6a;">3.50</span>
<div class="a" style="left:855px;top:18px;width:1px;height:9px;background:#b8b8b8;"></div>
<div class="a" style="left:855px;top:27px;width:1px;height:70px;background:#373737;"></div>
<span class="t" style="left:861.1px;top:13px;font-size:11px;color:#6a6a6a;">3.75</span>
<div class="a" style="left:902px;top:18px;width:1px;height:9px;background:#b8b8b8;"></div>
<div class="a" style="left:902px;top:27px;width:1px;height:70px;background:#373737;"></div>
<span class="t" style="left:908.1px;top:13px;font-size:11px;color:#6a6a6a;">4.00</span>
<div class="a" style="left:949px;top:18px;width:1px;height:9px;background:#b8b8b8;"></div>
<div class="a" style="left:949px;top:27px;width:1px;height:70px;background:#373737;"></div>
<span class="t" style="left:955.1px;top:13px;font-size:11px;color:#6a6a6a;">4.25</span>
<div class="a" style="left:997px;top:18px;width:1px;height:9px;background:#b8b8b8;"></div>
<div class="a" style="left:997px;top:27px;width:1px;height:70px;background:#373737;"></div>
<span class="t" style="left:1003.1px;top:13px;font-size:11px;color:#6a6a6a;">4.50</span>
<div class="a" style="left:1044px;top:18px;width:1px;height:9px;background:#b8b8b8;"></div>
<div class="a" style="left:1044px;top:27px;width:1px;height:70px;background:#373737;"></div>
<span class="t" style="left:1050.1px;top:13px;font-size:11px;color:#6a6a6a;">4.75</span>
<div class="a" style="left:1091px;top:18px;width:1px;height:9px;background:#b0b0b0;"></div>
<div class="a" style="left:1091px;top:27px;width:1px;height:70px;background:#262626;"></div>
<span class="t" style="left:1097.1px;top:13px;font-size:11px;color:#565656;">5.00</span>
<div class="a" style="left:1138px;top:18px;width:1px;height:9px;background:#6e6e6e;"></div>
<div class="a" style="left:1138px;top:27px;width:1px;height:70px;background:#262626;"></div>
<span class="t" style="left:1144.1px;top:13px;font-size:11px;color:#565656;">5.25</span>
<span class="t" style="left:60.7px;top:13px;font-size:11px;color:#565656;">-0.50</span>
<div class="a" style="left:1090px;top:0;width:1px;height:91px;background:#8c1c1c;"></div>
<svg width="7" height="6" viewBox="0 0 7 6" style="left:1084px;top:0"><path d="M1 0H7V5.6z" fill="#8c1c1c"/></svg>
<div class="a" style="left:148px;top:18px;width:1px;height:73px;background:#6e6e6e;"></div>
<div class="a" style="left:149px;top:0px;width:1px;height:91px;background:#1f8f1f;"></div>
<svg width="13" height="26" viewBox="0 0 13 26" style="left:142.5px;top:1px"><path d="M0.5 0H12.5V19.5L6.5 25.5L0.5 19.5z" fill="rgba(134,113,109,.72)"/><path d="M6.5 0H12.5L6.5 5z" fill="#3f9a3f" opacity=".32"/></svg>
<span class="t" style="transform:scaleX(0.9165);left:158.6px;top:-0.2px;font-size:13px;color:#b6b6b6;">0.00</span>
</div>
<span class="t" style="transform:scaleX(0.9910);left:1018.5px;top:600px;font-size:14px;line-height:18px;height:18px;color:#d0d0d0;text-shadow:1px 1px 1px rgba(0,0,0,.8);font-family:'Liberation Sans','Noto Sans CJK SC',sans-serif;">CSDN @远离UE4</span>
</div>
</body></html>
